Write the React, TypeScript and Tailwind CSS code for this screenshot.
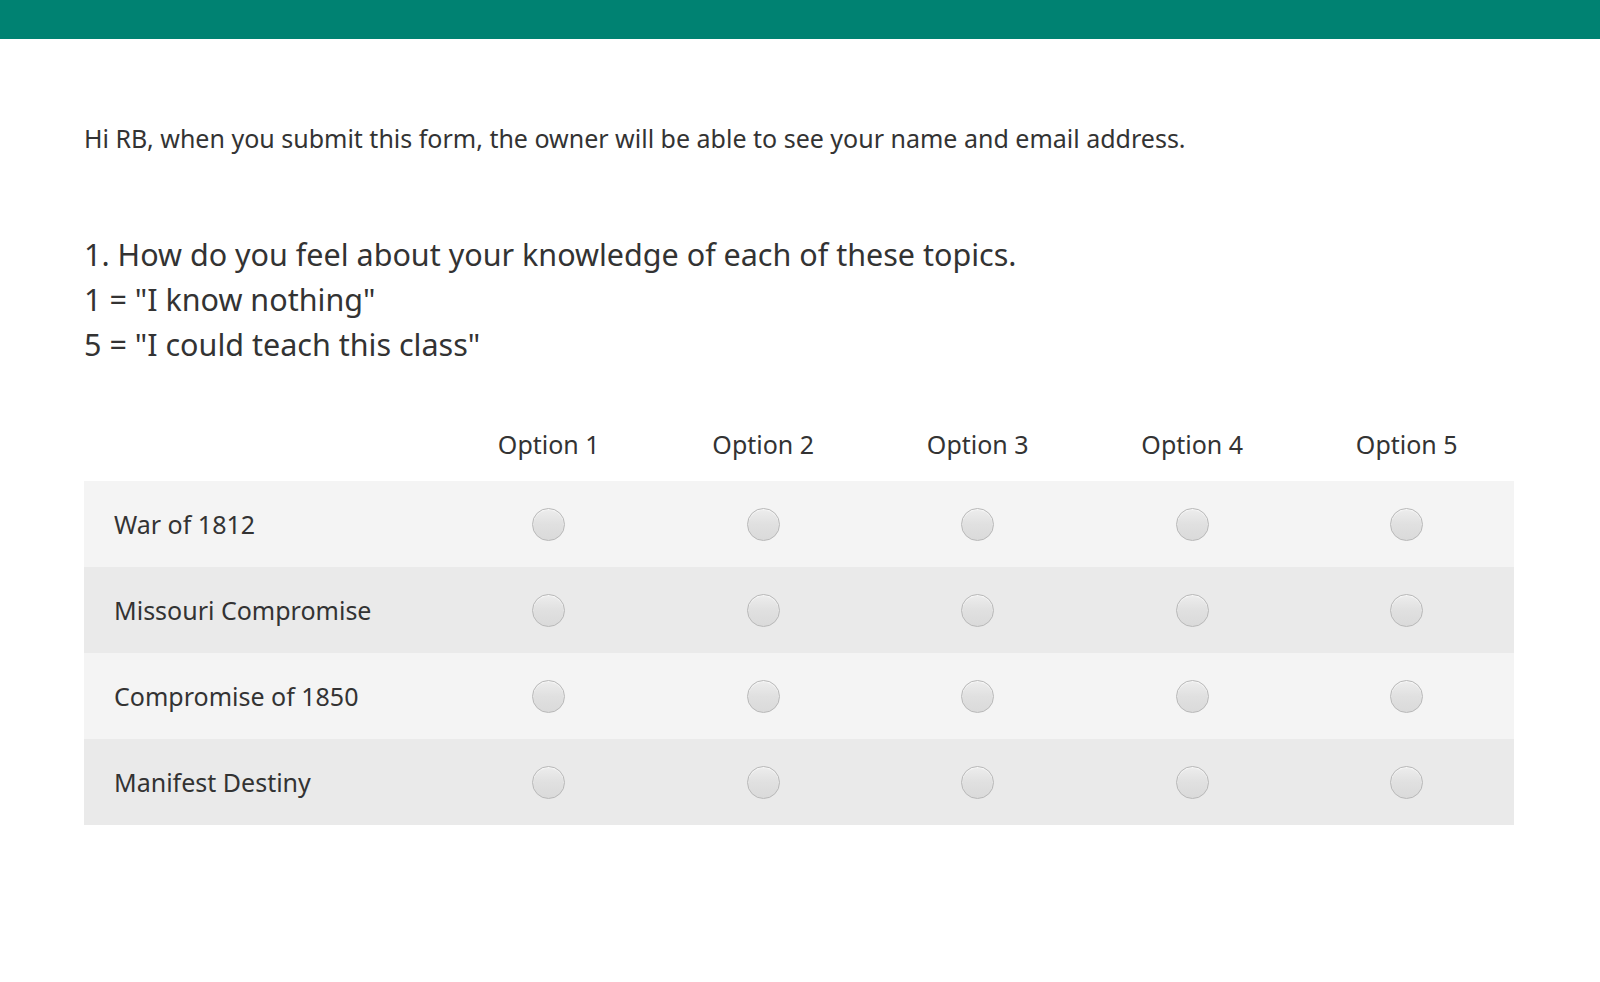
import React from "react";

const topics = ["War of 1812", "Missouri Compromise", "Compromise of 1850", "Manifest Destiny"];
const options = ["Option 1", "Option 2", "Option 3", "Option 4", "Option 5"];

function Radio() {
  return (
    <span className="block h-[33px] w-[33px] rounded-full border border-[#b8b8b8] bg-gradient-to-b from-[#ededed] via-[#e0e0e0] to-[#dadada] shadow-[inset_0_1px_1px_#f8f8f8]" />
  );
}

export default function App() {
  return (
    <div className="min-h-[982px] bg-white font-['Noto_Sans',sans-serif] text-[#333]">
      <div className="h-[39px] bg-[#008272]" />
      <div className="px-[84px] pt-[82px]">
        <p className="text-[25px] leading-[34px]">
          Hi RB, when you submit this form, the owner will be able to see your name and email address.
        </p>
        <div className="mt-[77px] text-[30.5px] leading-[45px]">
          <div>1. How do you feel about your knowledge of each of these topics.</div>
          <div>1 = "I know nothing"</div>
          <div>5 = "I could teach this class"</div>
        </div>
        <div className="w-[1430px]">
          <div className="flex pb-[20px] pt-[60px] text-[25px] leading-[34px]">
            <div className="w-1/4" />
            {options.map((o) => (
              <div key={o} className="w-[15%] text-center">
                {o}
              </div>
            ))}
          </div>
          {topics.map((t, i) => (
            <div key={t} className={`flex h-[86px] items-center ${i % 2 === 0 ? "bg-[#f4f4f4]" : "bg-[#eaeaea]"}`}>
              <div className="w-1/4 pl-[30px] text-[25px] leading-[34px]">{t}</div>
              {options.map((o) => (
                <div key={o} className="flex w-[15%] justify-center">
                  <Radio />
                </div>
              ))}
            </div>
          ))}
        </div>
      </div>
    </div>
  );
}
